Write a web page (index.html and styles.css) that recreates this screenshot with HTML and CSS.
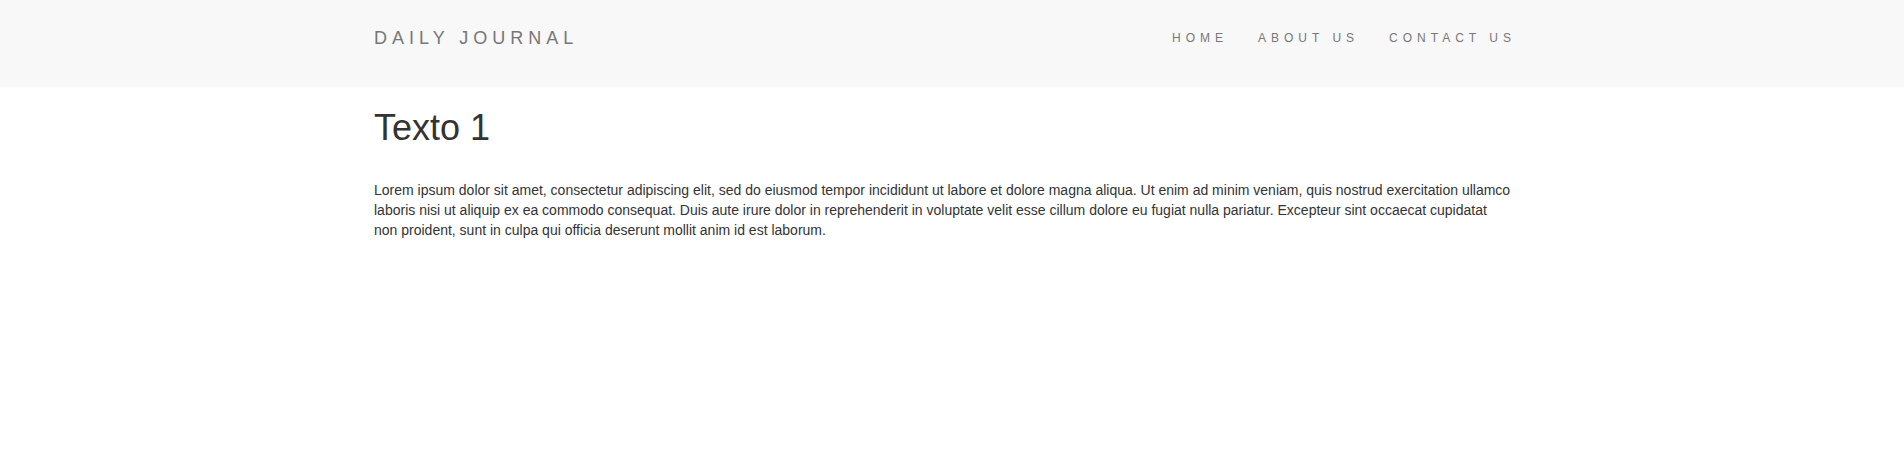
FILE: index.html
```html
<!DOCTYPE html>
<html lang="es">
<head>
<meta charset="utf-8">
<title>Daily Journal</title>
<link rel="stylesheet" href="styles.css">
</head>
<body>
<header class="site-header">
  <div class="container header-inner">
    <a class="brand" href="#">DAILY JOURNAL</a>
    <nav class="nav">
      <a class="nav-link" href="#">HOME</a>
      <a class="nav-link" href="#">ABOUT US</a>
      <a class="nav-link" href="#">CONTACT US</a>
    </nav>
  </div>
</header>
<main class="container content">
  <h1 class="title">Texto 1</h1>
  <p class="text">Lorem ipsum dolor sit amet, consectetur adipiscing elit, sed do eiusmod tempor incididunt ut labore et dolore magna aliqua. Ut enim ad minim veniam, quis nostrud exercitation ullamco laboris nisi ut aliquip ex ea commodo consequat. Duis aute irure dolor in reprehenderit in voluptate velit esse cillum dolore eu fugiat nulla pariatur. Excepteur sint occaecat cupidatat non proident, sunt in culpa qui officia deserunt mollit anim id est laborum.</p>
</main>
</body>
</html>
```

FILE: styles.css
```css
* { box-sizing: border-box; }
html, body { margin: 0; padding: 0; }
body {
  font-family: "Liberation Sans", Arial, Helvetica, sans-serif;
  font-size: 14px;
  line-height: 20px;
  color: #333;
  background: #fff;
}
.container {
  width: 1156px;
  margin: 0 auto;
}
.site-header {
  background: #f8f8f8;
  height: 87px;
}
.header-inner {
  display: flex;
  justify-content: space-between;
  align-items: flex-start;
  padding-top: 28px;
}
.brand {
  font-size: 18px;
  line-height: 20px;
  letter-spacing: 5px;
  color: #777;
  text-decoration: none;
}
.nav {
  display: flex;
}
.nav-link {
  font-size: 12px;
  line-height: 20px;
  letter-spacing: 5px;
  color: #777;
  text-decoration: none;
  padding: 0 15px;
}
.nav-link:last-child {
  padding-right: 14px;
}
.content {
  padding-top: 21px;
}
.title {
  font-size: 36px;
  font-weight: 500;
  line-height: 1.1;
  margin: 0 0 32px;
}
.text {
  margin: 0;
  max-width: 1138px;
}
```
